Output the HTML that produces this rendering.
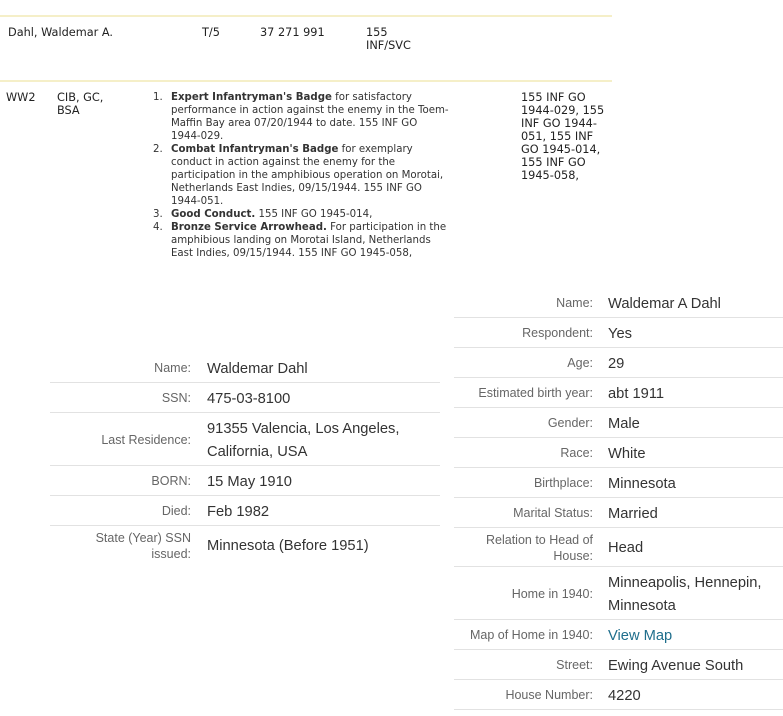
<!DOCTYPE html>
<html><head><meta charset="utf-8"><style>
body{margin:0;width:783px;height:716px;background:#fff;position:relative;overflow:hidden;font-family:"Liberation Sans",sans-serif}
.a{position:absolute;white-space:nowrap}
.t{font-family:"DejaVu Sans",sans-serif;font-size:11.3px;color:#222;line-height:13px}
.s{font-family:"DejaVu Sans",sans-serif;font-size:10.2px;color:#333;line-height:13px}
.hl{position:absolute;height:2px;background:#f5efc8}
.ln{position:absolute;height:1px;background:#e2e2e2}
.l{position:absolute;font-size:12.5px;color:#666;text-align:right;line-height:16px}
.v{position:absolute;font-size:14.7px;color:#333;line-height:23px;white-space:nowrap;margin-top:2px}
</style></head><body>
<div class="hl" style="left:0;top:15px;width:612px"></div>
<div class="hl" style="left:0;top:80px;width:612px"></div>
<div class="a t" style="left:8px;top:26px">Dahl, Waldemar A.</div>
<div class="a t" style="left:202px;top:26px">T/5</div>
<div class="a t" style="left:260px;top:26px">37 271 991</div>
<div class="a t" style="left:366px;top:26px">155<br>INF/SVC</div>
<div class="a t" style="left:6px;top:91px">WW2</div>
<div class="a t" style="left:57px;top:91px">CIB, GC,<br>BSA</div>
<div class="a s" style="left:153px;top:91px">1.<br><br><br><br>2.<br><br><br><br><br>3.<br>4.</div>
<div class="a s" style="left:171px;top:91px"><b>Expert Infantryman's Badge</b> for satisfactory<br>performance in action against the enemy in the Toem-<br>Maffin Bay area 07/20/1944 to date. 155 INF GO<br>1944-029.<br><b>Combat Infantryman's Badge</b> for exemplary<br>conduct in action against the enemy for the<br>participation in the amphibious operation on Morotai,<br>Netherlands East Indies, 09/15/1944. 155 INF GO<br>1944-051.<br><b>Good Conduct.</b> 155 INF GO 1945-014,<br><b>Bronze Service Arrowhead.</b> For participation in the<br>amphibious landing on Morotai Island, Netherlands<br>East Indies, 09/15/1944. 155 INF GO 1945-058,</div>
<div class="a t" style="left:521px;top:91px">155 INF GO<br>1944-029, 155<br>INF GO 1944-<br>051, 155 INF<br>GO 1945-014,<br>155 INF GO<br>1945-058,</div>

<div class="ln" style="left:50px;top:382px;width:390px"></div>
<div class="ln" style="left:50px;top:412px;width:390px"></div>
<div class="ln" style="left:50px;top:465px;width:390px"></div>
<div class="ln" style="left:50px;top:495px;width:390px"></div>
<div class="ln" style="left:50px;top:525px;width:390px"></div>
<div class="l" style="right:592px;top:360px">Name:</div><div class="v" style="left:207px;top:356px">Waldemar Dahl</div>
<div class="l" style="right:592px;top:390px">SSN:</div><div class="v" style="left:207px;top:386px">475-03-8100</div>
<div class="l" style="right:592px;top:432px">Last Residence:</div><div class="v" style="left:207px;top:416px">91355 Valencia, Los Angeles,<br>California, USA</div>
<div class="l" style="right:592px;top:473px">BORN:</div><div class="v" style="left:207px;top:469px">15 May 1910</div>
<div class="l" style="right:592px;top:503px">Died:</div><div class="v" style="left:207px;top:499px">Feb 1982</div>
<div class="l" style="right:592px;top:530px">State (Year) SSN<br>issued:</div><div class="v" style="left:207px;top:533px">Minnesota (Before 1951)</div>

<div class="ln" style="left:454px;top:317px;width:329px"></div>
<div class="ln" style="left:454px;top:347px;width:329px"></div>
<div class="ln" style="left:454px;top:377px;width:329px"></div>
<div class="ln" style="left:454px;top:407px;width:329px"></div>
<div class="ln" style="left:454px;top:437px;width:329px"></div>
<div class="ln" style="left:454px;top:467px;width:329px"></div>
<div class="ln" style="left:454px;top:497px;width:329px"></div>
<div class="ln" style="left:454px;top:527px;width:329px"></div>
<div class="ln" style="left:454px;top:566px;width:329px"></div>
<div class="ln" style="left:454px;top:619px;width:329px"></div>
<div class="ln" style="left:454px;top:649px;width:329px"></div>
<div class="ln" style="left:454px;top:679px;width:329px"></div>
<div class="ln" style="left:454px;top:709px;width:329px"></div>
<div class="l" style="right:190px;top:295px">Name:</div><div class="v" style="left:608px;top:291px">Waldemar A Dahl</div>
<div class="l" style="right:190px;top:325px">Respondent:</div><div class="v" style="left:608px;top:321px">Yes</div>
<div class="l" style="right:190px;top:355px">Age:</div><div class="v" style="left:608px;top:351px">29</div>
<div class="l" style="right:190px;top:385px">Estimated birth year:</div><div class="v" style="left:608px;top:381px">abt 1911</div>
<div class="l" style="right:190px;top:415px">Gender:</div><div class="v" style="left:608px;top:411px">Male</div>
<div class="l" style="right:190px;top:445px">Race:</div><div class="v" style="left:608px;top:441px">White</div>
<div class="l" style="right:190px;top:475px">Birthplace:</div><div class="v" style="left:608px;top:471px">Minnesota</div>
<div class="l" style="right:190px;top:505px">Marital Status:</div><div class="v" style="left:608px;top:501px">Married</div>
<div class="l" style="right:190px;top:532px">Relation to Head of<br>House:</div><div class="v" style="left:608px;top:535px">Head</div>
<div class="l" style="right:190px;top:586px">Home in 1940:</div><div class="v" style="left:608px;top:570px">Minneapolis, Hennepin,<br>Minnesota</div>
<div class="l" style="right:190px;top:627px">Map of Home in 1940:</div><div class="v" style="left:608px;top:623px;color:#1f6e8c">View Map</div>
<div class="l" style="right:190px;top:657px">Street:</div><div class="v" style="left:608px;top:653px">Ewing Avenue South</div>
<div class="l" style="right:190px;top:687px">House Number:</div><div class="v" style="left:608px;top:683px">4220</div>
</body></html>
